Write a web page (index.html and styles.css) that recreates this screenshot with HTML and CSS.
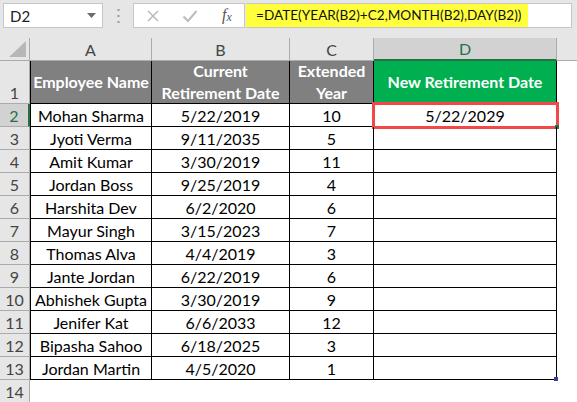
FILE: index.html
```html
<!DOCTYPE html>
<html>
<head>
<meta charset="utf-8">
<link rel="stylesheet" href="styles.css">
</head>
<body>
<div class="app">
  <div class="toolbar">
    <div class="namebox">
      <span class="ref">D2</span>
      <svg class="caret" width="9" height="5" viewBox="0 0 9 5"><path d="M0 0h9L4.5 5z" fill="#6b6b6b"/></svg>
    </div>
    <svg class="dots" width="3" height="14" viewBox="0 0 3 14"><rect x="0.5" y="0" width="2" height="2" fill="#9a9a9a"/><rect x="0.5" y="6" width="2" height="2" fill="#9a9a9a"/><rect x="0.5" y="12" width="2" height="2" fill="#9a9a9a"/></svg>
    <div class="fxbox">
      <svg class="ico" width="14" height="14" viewBox="0 0 14 14"><path d="M2 2L12 12M12 2L2 12" stroke="#bcbcbc" stroke-width="1.6" fill="none"/></svg>
      <svg class="ico" width="16" height="14" viewBox="0 0 16 14"><path d="M1.5 7.5L6 12L14.5 2" stroke="#bcbcbc" stroke-width="2" fill="none"/></svg>
      <span class="fx">f<span class="fxx">x</span></span>
    </div>
    <div class="formula"><span class="hl">=DATE(YEAR(B2)+C2,MONTH(B2),DAY(B2))</span></div>
  </div>
  <div class="sheet">
    <div class="corner"><svg width="17" height="16" viewBox="0 0 17 16"><path d="M17 0V16H0z" fill="#b7b7b7"/></svg></div>
    <div class="colhead">A</div>
    <div class="colhead">B</div>
    <div class="colhead">C</div>
    <div class="colhead sel">D</div>
    <div class="colhead rest"></div>

    <div class="rowhead">1</div>
    <div class="hd first">Employee Name</div>
    <div class="hd">Current<br>Retirement Date</div>
    <div class="hd">Extended<br>Year</div>
    <div class="hd green">New Retirement Date</div>
    <div class="blank"></div>

    <div class="rowhead sel">2</div>
    <div class="c first">Mohan Sharma</div><div class="c">5/22/2019</div><div class="c">10</div><div class="c active">5/22/2029<span class="handle"></span></div><div class="blank"></div>

    <div class="rowhead">3</div>
    <div class="c first">Jyoti Verma</div><div class="c">9/11/2035</div><div class="c">5</div><div class="c"></div><div class="blank"></div>

    <div class="rowhead">4</div>
    <div class="c first">Amit Kumar</div><div class="c">3/30/2019</div><div class="c">11</div><div class="c"></div><div class="blank"></div>

    <div class="rowhead">5</div>
    <div class="c first">Jordan Boss</div><div class="c">9/25/2019</div><div class="c">4</div><div class="c"></div><div class="blank"></div>

    <div class="rowhead">6</div>
    <div class="c first">Harshita Dev</div><div class="c">6/2/2020</div><div class="c">6</div><div class="c"></div><div class="blank"></div>

    <div class="rowhead">7</div>
    <div class="c first">Mayur Singh</div><div class="c">3/15/2023</div><div class="c">7</div><div class="c"></div><div class="blank"></div>

    <div class="rowhead">8</div>
    <div class="c first">Thomas Alva</div><div class="c">4/4/2019</div><div class="c">3</div><div class="c"></div><div class="blank"></div>

    <div class="rowhead">9</div>
    <div class="c first">Jante Jordan</div><div class="c">6/22/2019</div><div class="c">6</div><div class="c"></div><div class="blank"></div>

    <div class="rowhead">10</div>
    <div class="c first">Abhishek Gupta</div><div class="c">3/30/2019</div><div class="c">9</div><div class="c"></div><div class="blank"></div>

    <div class="rowhead">11</div>
    <div class="c first">Jenifer Kat</div><div class="c">6/6/2033</div><div class="c">12</div><div class="c"></div><div class="blank"></div>

    <div class="rowhead">12</div>
    <div class="c first">Bipasha Sahoo</div><div class="c">6/18/2025</div><div class="c">3</div><div class="c"></div><div class="blank"></div>

    <div class="rowhead">13</div>
    <div class="c first">Jordan Martin</div><div class="c">4/5/2020</div><div class="c">1</div><div class="c last"><span class="fill"></span></div><div class="blank"></div>

    <div class="rowhead">14</div>
    <div class="blank"></div><div class="blank"></div><div class="blank"></div><div class="blank"></div><div class="blank"></div>
  </div>
</div>
</body>
</html>
```

FILE: styles.css
```css
html, body {
  margin: 0;
  padding: 0;
  background: #ffffff;
}
.app {
  width: 577px;
  height: 402px;
  overflow: hidden;
  font-family: Lato, "Open Sans", sans-serif;
  font-size: 16px;
  color: #000;
}
.toolbar {
  height: 38px;
  background: #e6e6e6;
  display: flex;
  align-items: flex-start;
  padding: 3px 5px 0 3px;
  box-sizing: border-box;
}
.namebox {
  width: 100px;
  height: 25px;
  box-sizing: border-box;
  background: #fff;
  border: 1px solid #c6c6c6;
  display: flex;
  align-items: center;
  justify-content: space-between;
  padding: 0 6px 0 6px;
}
.ref {
  font-size: 15px;
  color: #222;
}
.dots {
  margin: 6px 13px 0 14px;
}
.fxbox {
  width: 112px;
  height: 25px;
  box-sizing: border-box;
  background: #fff;
  border: 1px solid #c6c6c6;
  display: flex;
  align-items: center;
  padding-left: 12px;
  gap: 22px;
}
.fx {
  font-family: "Liberation Serif", serif;
  font-style: italic;
  font-size: 16px;
  color: #555;
  margin-left: 2px;
}
.fxx {
  font-size: 12px;
  vertical-align: -1px;
}
.formula {
  flex: 1;
  height: 25px;
  box-sizing: border-box;
  margin-left: 1px;
  background: #fff;
  border: 1px solid #c6c6c6;
  border-left: none;
  display: flex;
}
.hl {
  background: #ffff3c;
  width: 282px;
  height: 23px;
  box-sizing: border-box;
  padding-left: 10px;
  font-size: 13.6px;
  line-height: 23px;
  color: #111;
  white-space: nowrap;
}
.sheet {
  display: grid;
  grid-template-columns: 30px 122px 138px 84px 183px 1fr;
  grid-template-rows: 23px 43px repeat(13, 23px);
  background: #fff;
}
.corner {
  background: #e6e6e6;
  border-right: 1px solid #ababab;
  border-bottom: 1px solid #ababab;
  box-sizing: border-box;
  display: flex;
  align-items: flex-end;
  justify-content: flex-end;
  padding: 0 3px 3px 0;
}
.colhead {
  background: #e6e6e6;
  border-right: 1px solid #ababab;
  border-bottom: 1px solid #ababab;
  box-sizing: border-box;
  display: flex;
  align-items: center;
  justify-content: center;
  color: #444;
  font-size: 16px;
}
.colhead.sel {
  background: #d2d2d2;
  color: #217346;
  border-bottom: 2px solid #217346;
}
.colhead.rest {
  border-right: none;
}
.rowhead {
  background: #e6e6e6;
  border-right: 1px solid #ababab;
  border-bottom: 1px solid #ababab;
  box-sizing: border-box;
  display: flex;
  align-items: flex-end;
  justify-content: center;
  color: #444;
  font-size: 16px;
  line-height: 21px;
}
.rowhead.sel {
  background: #d2d2d2;
  color: #217346;
  border-right: 2px solid #217346;
}
.hd {
  background: #808080;
  color: #fff;
  font-weight: bold;
  text-align: center;
  display: flex;
  align-items: center;
  justify-content: center;
  line-height: 22px;
  border-right: 1px solid #000;
  border-bottom: 1px solid #000;
  box-sizing: border-box;
}
.hd.green {
  background: #00b050;
}
.c {
  display: flex;
  align-items: center;
  justify-content: center;
  border-right: 1px solid #000;
  border-bottom: 1px solid #000;
  box-sizing: border-box;
  white-space: nowrap;
  position: relative;
}
.first {
  border-left: 1px solid #000;
}
.active {
  outline: 3px solid #f44848;
  outline-offset: -1px;
}
.handle {
  position: absolute;
  right: -3px;
  bottom: -3px;
  width: 4px;
  height: 4px;
  background: #217346;
}
.fill {
  position: absolute;
  right: -2px;
  bottom: -2px;
  width: 4px;
  height: 4px;
  background: #3b3f9a;
}
.blank {
  background: #fff;
}
```
